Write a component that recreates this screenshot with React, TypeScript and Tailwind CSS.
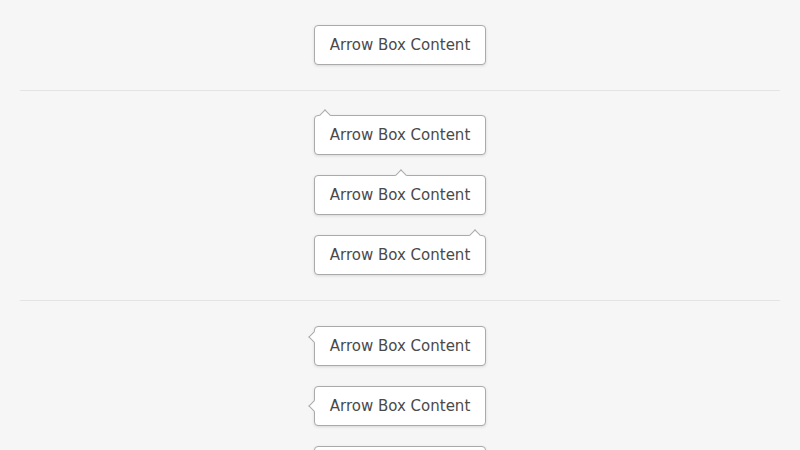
import React from "react";

type Pos = "none" | "top-left" | "top-center" | "top-right" | "left-top" | "left-center" | "left-bottom";

function Box({ pos }: { pos: Pos }) {
  let arrow: React.ReactNode = null;
  const base = "absolute w-[8px] h-[8px] bg-white border-[#aaaaaa] rotate-45";
  if (pos === "top-left") arrow = <span className={`${base} border-l border-t -top-[5px] left-[6px]`} />;
  if (pos === "top-center") arrow = <span className={`${base} border-l border-t -top-[5px] left-[82px]`} />;
  if (pos === "top-right") arrow = <span className={`${base} border-l border-t -top-[5px] right-[6px]`} />;
  if (pos === "left-top") arrow = <span className={`${base} border-l border-b -left-[5px] top-[6px]`} />;
  if (pos === "left-center") arrow = <span className={`${base} border-l border-b -left-[5px] top-[15px]`} />;
  if (pos === "left-bottom") arrow = <span className={`${base} border-l border-b -left-[5px] bottom-[6px]`} />;
  return (
    <div className="relative w-[172px] h-[40px] bg-white border border-[#aaaaaa] rounded-[4px] shadow-[0_1px_3px_rgba(0,0,0,0.12)] flex items-center justify-center text-[15px] text-[#4a4a4a]">
      {arrow}
      <span className="relative">Arrow Box Content</span>
    </div>
  );
}

export default function App() {
  return (
    <div className="w-[800px] h-[450px] overflow-hidden bg-[#f6f6f6] px-[20px]" style={{ fontFamily: '"DejaVu Sans", sans-serif' }}>
      <div className="flex flex-col items-center pt-[25px] pb-[25px] border-b border-[#e4e4e4]">
        <Box pos="none" />
      </div>
      <div className="flex flex-col items-center gap-[20px] pt-[24px] pb-[25px] border-b border-[#e4e4e4]">
        <Box pos="top-left" />
        <Box pos="top-center" />
        <Box pos="top-right" />
      </div>
      <div className="flex flex-col items-center gap-[20px] pt-[25px] pb-[25px]">
        <Box pos="left-top" />
        <Box pos="left-center" />
        <Box pos="left-bottom" />
      </div>
    </div>
  );
}
